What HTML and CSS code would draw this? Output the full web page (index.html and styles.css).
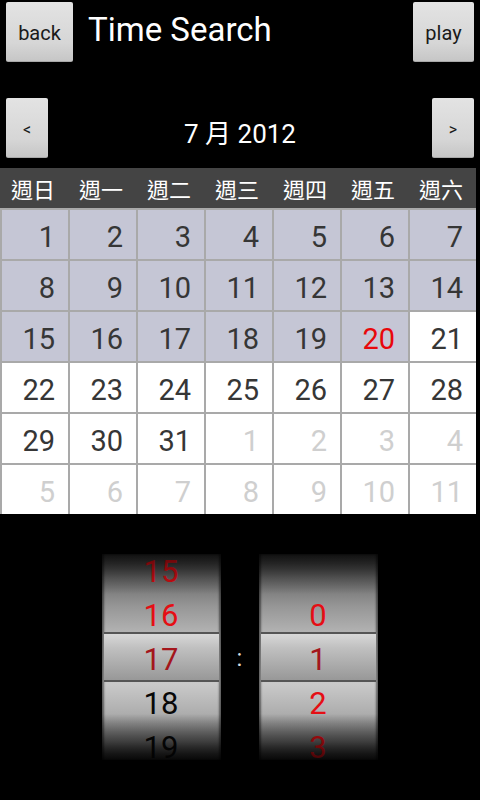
FILE: index.html
```html
<!DOCTYPE html>
<html>
<head>
<meta charset="utf-8">
<link rel="stylesheet" href="styles.css">
</head>
<body>
<div class="topbar">
  <div class="btn btn-back">back</div>
  <div class="title">Time Search</div>
  <div class="btn btn-play">play</div>
</div>
<div class="navrow">
  <div class="btn btn-arrow">&lt;</div>
  <div class="month">7 月 2012</div>
  <div class="btn btn-arrow">&gt;</div>
</div>
<div class="weekhead">
  <div>週日</div><div>週一</div><div>週二</div><div>週三</div><div>週四</div><div>週五</div><div>週六</div>
</div>
<div class="grid">
  <div class="cell past">1</div><div class="cell past">2</div><div class="cell past">3</div><div class="cell past">4</div><div class="cell past">5</div><div class="cell past">6</div><div class="cell past">7</div>
  <div class="cell past">8</div><div class="cell past">9</div><div class="cell past">10</div><div class="cell past">11</div><div class="cell past">12</div><div class="cell past">13</div><div class="cell past">14</div>
  <div class="cell past">15</div><div class="cell past">16</div><div class="cell past">17</div><div class="cell past">18</div><div class="cell past">19</div><div class="cell past today">20</div><div class="cell">21</div>
  <div class="cell">22</div><div class="cell">23</div><div class="cell">24</div><div class="cell">25</div><div class="cell">26</div><div class="cell">27</div><div class="cell">28</div>
  <div class="cell">29</div><div class="cell">30</div><div class="cell">31</div><div class="cell other">1</div><div class="cell other">2</div><div class="cell other">3</div><div class="cell other">4</div>
  <div class="cell other">5</div><div class="cell other">6</div><div class="cell other">7</div><div class="cell other">8</div><div class="cell other">9</div><div class="cell other">10</div><div class="cell other">11</div>
</div>
<div class="pickers">
  <div class="wheel">
    <div class="band"></div>
    <div class="items">
      <div class="item red">15</div>
      <div class="item red">16</div>
      <div class="item sel">17</div>
      <div class="item black">18</div>
      <div class="item black">19</div>
    </div>
    <div class="shade"></div>
  </div>
  <div class="colon">:</div>
  <div class="wheel">
    <div class="band"></div>
    <div class="items">
      <div class="item red"></div>
      <div class="item red">0</div>
      <div class="item sel">1</div>
      <div class="item red">2</div>
      <div class="item red">3</div>
    </div>
    <div class="shade"></div>
  </div>
</div>
</body>
</html>
```
FILE: styles.css
```css
html, body {
  margin: 0;
  padding: 0;
  background: #000;
  width: 480px;
  height: 800px;
  overflow: hidden;
  font-family: Roboto, "Noto Sans CJK TC", sans-serif;
}

.btn {
  background: linear-gradient(to bottom, #e3e3e3 0%, #d6d6d6 70%, #c6c6c6 100%);
  color: #1a1a1a;
  border-radius: 2px;
  display: flex;
  align-items: center;
  justify-content: center;
  box-sizing: border-box;
  border-bottom: 1px solid #a8a8a8;
}

.topbar {
  display: flex;
  align-items: flex-start;
  padding: 2px 6px 0 6px;
  height: 62px;
}

.btn-back {
  width: 67px;
  height: 60px;
  font-size: 20px;
  padding-top: 2px;
}

.btn-play {
  width: 61px;
  height: 60px;
  font-size: 20px;
  margin-left: auto;
  padding-top: 2px;
}

.title {
  color: #fff;
  font-size: 33px;
  margin-left: 15px;
  line-height: 32px;
  padding-top: 12px;
}

.navrow {
  display: flex;
  align-items: center;
  padding: 0 6px;
  margin-top: 34px;
  height: 60px;
}

.btn-arrow {
  width: 42px;
  height: 60px;
  font-size: 16px;
  padding-top: 4px;
}

.month {
  flex: 1;
  text-align: center;
  color: #fff;
  font-size: 26px;
  padding-top: 6px;
}

.weekhead {
  margin-top: 10px;
  width: 476px;
  height: 40px;
  background: #444;
  display: grid;
  grid-template-columns: repeat(7, 68px);
  font-family: "Noto Sans CJK TC", sans-serif;
  color: #fff;
  font-size: 22px;
}

.weekhead div {
  display: flex;
  align-items: center;
  justify-content: center;
  padding-right: 2px;
}

.grid {
  width: 476px;
  display: grid;
  grid-template-columns: repeat(7, 68px);
  grid-auto-rows: 51px;
}

.cell {
  box-sizing: border-box;
  border-top: 2px solid #a9a9a9;
  border-left: 2px solid #a9a9a9;
  background: #fff;
  color: #363636;
  font-size: 29px;
  display: flex;
  align-items: center;
  justify-content: flex-end;
  padding: 4px 13px 0 0;
}

.cell.past {
  background: #c5c6d5;
}

.cell.today {
  color: #e8080c;
}

.cell.other {
  color: #cfcfcf;
}

.pickers {
  margin-top: 40px;
  display: flex;
  justify-content: center;
  align-items: center;
  padding-right: 1px;
}

.colon {
  width: 38px;
  text-align: center;
  color: #ddd;
  font-size: 24px;
  padding-top: 2px;
}

.wheel {
  position: relative;
  width: 119px;
  height: 206px;
  overflow: hidden;
  background: linear-gradient(to bottom, #2a2a2a 0px, #6a6a6a 24px, #969696 52px, #b2b2b2 78px, #c9c9c9 130px, #adadad 160px, #6a6a6a 188px, #1c1c1c 206px);
  box-shadow: inset 2px 0 2px rgba(0,0,0,0.5), inset -2px 0 2px rgba(0,0,0,0.5);
}

.band {
  position: absolute;
  left: 2px;
  right: 2px;
  top: 78px;
  height: 50px;
  box-sizing: border-box;
  border-top: 2px solid #555;
  border-bottom: 2px solid #555;
  background: linear-gradient(to bottom, #d8d8d8 0%, #c0c0c0 30%, #989898 100%);
  z-index: 0;
}

.items {
  position: relative;
  z-index: 1;
  margin-top: -6px;
}

.item {
  height: 44px;
  display: flex;
  align-items: center;
  justify-content: center;
  font-size: 31px;
  padding-top: 3px;
  box-sizing: border-box;
}

.item.red { color: #e50e14; }
.item.sel { color: #a4161c; }
.item.black { color: #080808; }

.shade {
  position: absolute;
  left: 0;
  right: 0;
  top: 0;
  bottom: 0;
  z-index: 2;
  background: linear-gradient(to bottom, rgba(0,0,0,0.6) 0px, rgba(0,0,0,0) 40px, rgba(0,0,0,0) 160px, rgba(0,0,0,0.7) 206px);
}
```
